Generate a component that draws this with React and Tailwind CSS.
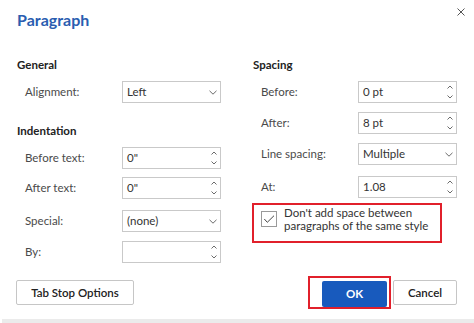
import React from 'react';

function Chevron() {
  return (
    <svg width="8" height="5" viewBox="0 0 8 5" fill="none">
      <path d="M0.5 0.8 4 4.2 7.5 0.8" stroke="#6b6b6b" strokeWidth="1" />
    </svg>
  );
}

function Spinner() {
  return (
    <div className="flex flex-col items-center gap-[6px]">
      <svg width="6" height="4" viewBox="0 0 6 4" fill="none">
        <path d="M0.5 3.5 3 1 5.5 3.5" stroke="#6b6b6b" strokeWidth="1" />
      </svg>
      <svg width="6" height="4" viewBox="0 0 6 4" fill="none">
        <path d="M0.5 0.5 3 3 5.5 0.5" stroke="#6b6b6b" strokeWidth="1" />
      </svg>
    </div>
  );
}

function Field({ label, value, kind, className = '' }) {
  return (
    <div className={`flex items-center h-[22px] ${className}`}>
      <div className="w-[105px] pl-[8px] text-[11.5px] text-[#4a4a4a]">{label}</div>
      <div className="w-[99px] h-[22px] border border-[#c9c9c9] bg-white flex items-center justify-between pl-[4px] pr-[3px]">
        <span className="text-[11.5px] text-[#333]">{value}</span>
        {kind === 'select' ? <Chevron /> : <Spinner />}
      </div>
    </div>
  );
}

function Heading({ children, className = '' }) {
  return (
    <div className={`text-[11.5px] leading-[16px] font-bold text-[#222] ${className}`}>{children}</div>
  );
}

export default function App() {
  return (
    <div className="w-[474px] h-[323px] bg-white overflow-hidden flex flex-col font-['Lato',sans-serif]">
      {/* header */}
      <div className="flex justify-between items-start pl-[17px] pr-[9px]">
        <h1 className="pt-[10px] text-[16px] leading-[20px] font-bold text-[#2a5db0]">Paragraph</h1>
        <svg className="mt-[8px]" width="8" height="8" viewBox="0 0 8 8" fill="none">
          <path d="M0.5 0.5 7.5 7.5M7.5 0.5 0.5 7.5" stroke="#555" strokeWidth="1" />
        </svg>
      </div>

      {/* body */}
      <div className="flex mt-[27px] pl-[17px] pr-[16px] gap-[32px]">
        <div className="w-[204px] flex flex-col">
          <Heading>General</Heading>
          <Field className="mt-[8px]" label="Alignment:" value="Left" kind="select" />
          <Heading className="mt-[20px]">Indentation</Heading>
          <Field className="mt-[8px]" label="Before text:" value="0&quot;" kind="spin" />
          <Field className="mt-[8px]" label="After text:" value={'0"'} kind="spin" />
          <Field className="mt-[11px]" label="Special:" value="(none)" kind="select" />
          <Field className="mt-[9px]" label="By:" value="" kind="spin" />
        </div>
        <div className="w-[205px] flex flex-col">
          <Heading>Spacing</Heading>
          <Field className="mt-[8px]" label="Before:" value="0 pt" kind="spin" />
          <Field className="mt-[9px]" label="After:" value="8 pt" kind="spin" />
          <Field className="mt-[9px]" label="Line spacing:" value="Multiple" kind="select" />
          <Field className="mt-[11px]" label="At:" value="1.08" kind="spin" />
          <div className="mt-[5px] -ml-[1px] w-[190px] h-[40px] border-2 border-[#e1202b] flex items-start pl-[7px]">
            <div className="mt-[6px] w-[16px] h-[16px] border border-[#9a9a9a] bg-white shrink-0">
              <svg width="14" height="14" viewBox="0 0 14 14" fill="none">
                <path d="M2.3 7 5.3 10.3 12 3.7" stroke="#444" strokeWidth="1" />
              </svg>
            </div>
            <div className="ml-[7px] pt-[1px] text-[11.5px] leading-[13px] text-[#333]">
              Don't add space between
              <br />
              paragraphs of the same style
            </div>
          </div>
        </div>
      </div>

      {/* footer */}
      <div className="flex items-start justify-between mt-[13px] pl-[16px] pr-[17px]">
        <button className="mt-[4px] w-[118px] h-[25px] border border-[#c6c6c6] rounded-[2px] bg-white text-[11.5px] font-semibold text-[#222]">
          Tab Stop Options
        </button>
        <div className="flex items-start">
          <div className="border-2 border-[#e1202b] pl-[12px] pt-[2px] pr-[2px]">
            <button className="w-[65px] h-[26px] rounded-[2px] bg-[#185abd] text-white text-[11.5px] font-bold">OK</button>
          </div>
          <button className="ml-[2px] mt-[4px] w-[64px] h-[25px] border border-[#c6c6c6] rounded-[2px] bg-white text-[11.5px] font-semibold text-[#222]">
            Cancel
          </button>
        </div>
      </div>

      <div className="mt-auto ml-[2px] h-[4px] bg-[#ebebeb]" />
    </div>
  );
}
